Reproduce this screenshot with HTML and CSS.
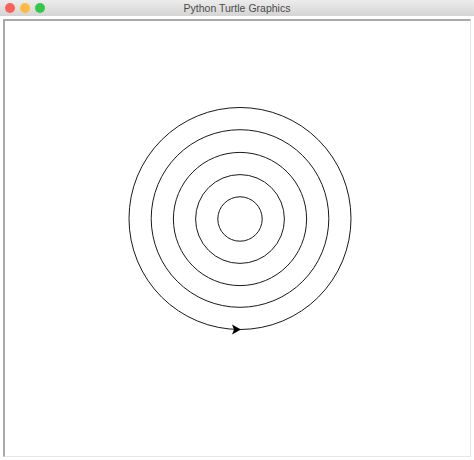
FILE: index.html
```html
<!DOCTYPE html>
<html>
<head>
<meta charset="utf-8">
<link rel="stylesheet" href="styles.css">
</head>
<body>
<div class="window">
  <div class="titlebar">
    <div class="lights">
      <span class="light red"></span>
      <span class="light yellow"></span>
      <span class="light green"></span>
    </div>
    <div class="title">Python Turtle Graphics</div>
  </div>
  <div class="canvas">
    <svg class="drawing" width="465" height="435" viewBox="5 21 465 435" xmlns="http://www.w3.org/2000/svg">
      <g fill="none" stroke="#1a1a1a" stroke-width="1">
        <circle cx="240" cy="218.5" r="111"/>
        <circle cx="240" cy="218.5" r="88.8"/>
        <circle cx="240" cy="219" r="66.6"/>
        <circle cx="240" cy="219" r="44.4"/>
        <circle cx="240" cy="219" r="22.2"/>
      </g>
      <polygon points="241,329.5 232,324.5 234,329.5 232,334.5" fill="#000"/>
    </svg>
  </div>
</div>
</body>
</html>
```
FILE: styles.css
```css
html, body {
  margin: 0;
  padding: 0;
  background: #ffffff;
}
.window {
  width: 474px;
  height: 460px;
  display: flex;
  flex-direction: column;
  background: #ffffff;
}
.titlebar {
  position: relative;
  height: 16px;
  background: linear-gradient(#ececec, #d4d4d4);
  display: flex;
  align-items: center;
  justify-content: center;
}
.lights {
  position: absolute;
  left: 5px;
  top: 3px;
  display: flex;
  gap: 5px;
}
.light {
  width: 10px;
  height: 10px;
  border-radius: 50%;
  display: block;
}
.red { background: #fc605c; }
.yellow { background: #fdbc40; }
.green { background: #34c84a; }
.title {
  font-family: "Liberation Sans", Arial, sans-serif;
  font-size: 10.5px;
  color: #4a4a4a;
  line-height: 16px;
}
.canvas {
  margin-top: 3px;
  margin-left: 3px;
  width: 465px;
  height: 435px;
  border-left: 2px solid #a9a9a9;
  border-top: 2px solid #a9a9a9;
  border-right: 1px solid #e6e6e6;
  border-bottom: 1px solid #e6e6e6;
  background: #ffffff;
}
.drawing {
  display: block;
}
```
